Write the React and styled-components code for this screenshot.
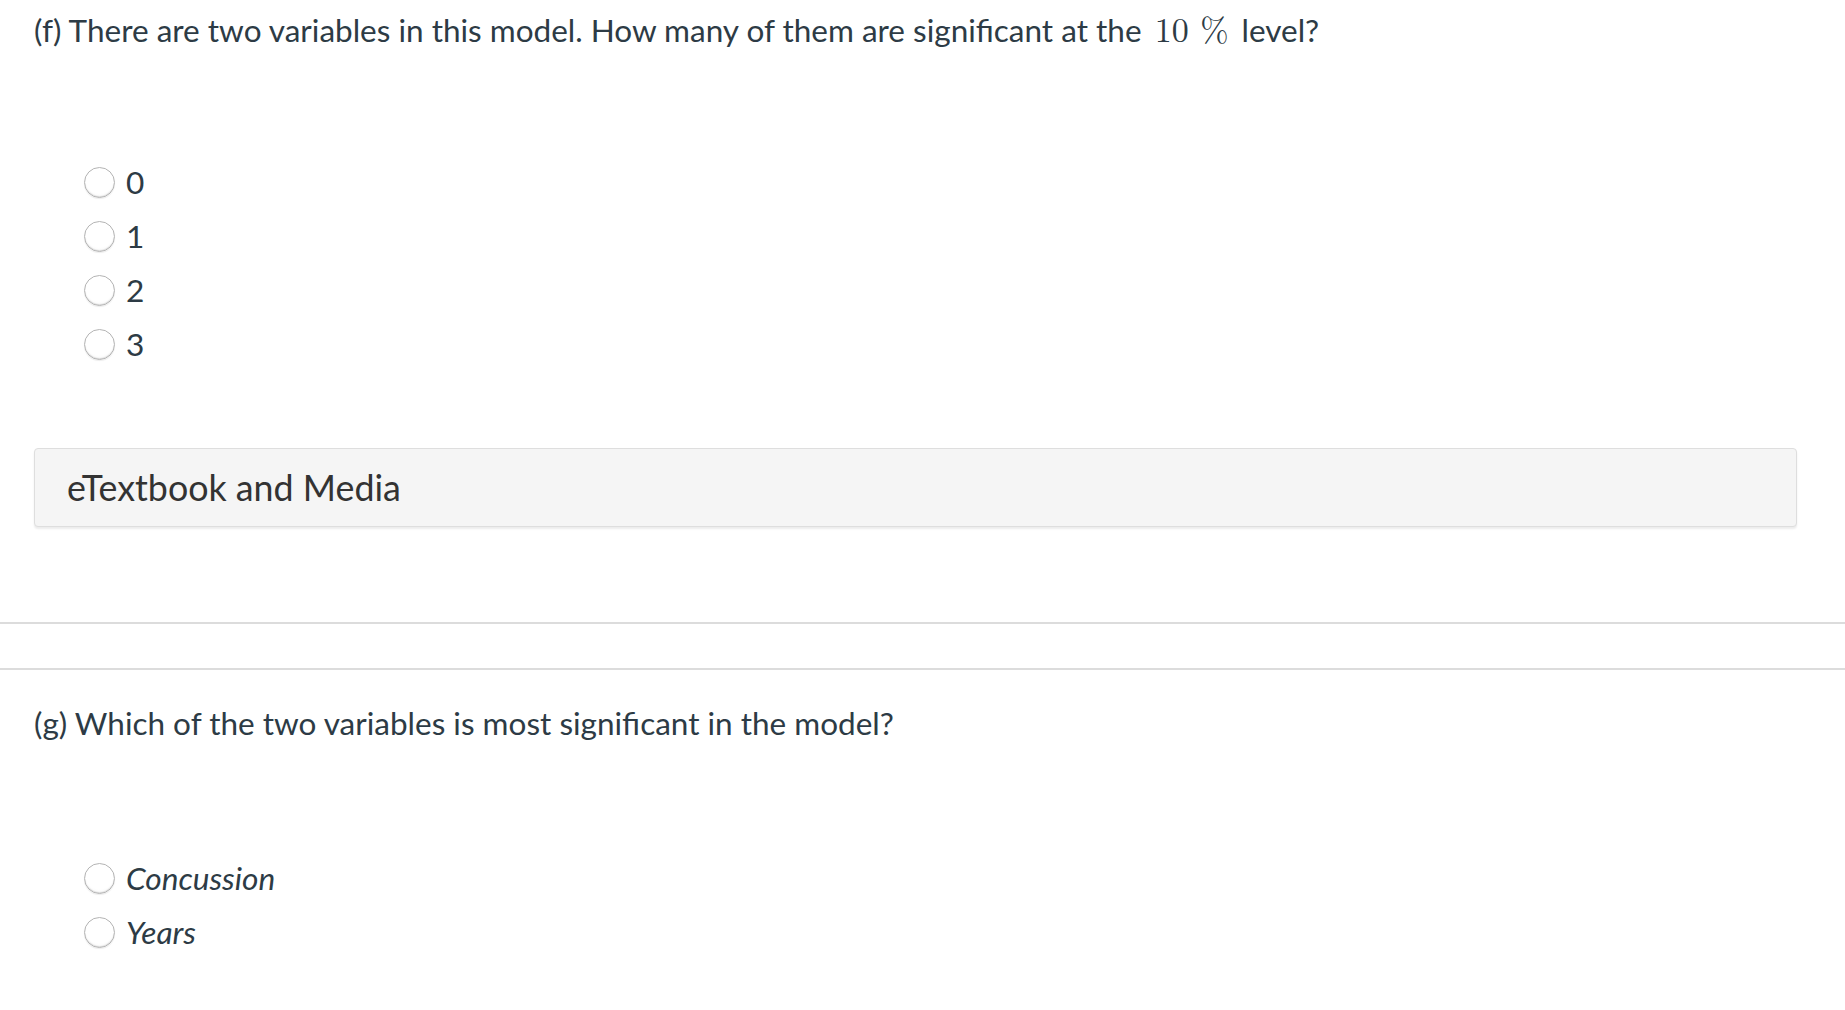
import React from "react";
import styled, { createGlobalStyle } from "styled-components";

const GlobalStyle = createGlobalStyle`
  html, body {
    margin: 0;
    padding: 0;
    background: #ffffff;
  }
  body {
    font-family: Lato, "Noto Sans", "Liberation Sans", sans-serif;
    color: #2d3b45;
  }
`;

const Page = styled.div`
  width: 1845px;
  height: 1010px;
  overflow: hidden;
  box-sizing: border-box;
  padding-top: 8px;
`;

const Question = styled.section`
  padding: 0 48px 0 34px;
`;

const Prompt = styled.p`
  margin: ${props => props.$top || 0}px 0 0;
  font-size: 31.5px;
  line-height: 40px;
  color: #2d3b45;
`;

const MathText = styled.span`
  font-family: "Latin Modern Roman", "Liberation Serif", "DejaVu Serif", serif;
  font-size: 34px;
  margin: 0 13px 0 2px;
`;

const Options = styled.ul`
  list-style: none;
  margin: ${props => props.$top}px 0 0 50px;
  padding: 0;
`;

const Option = styled.li`
  display: flex;
  align-items: center;
  height: 54px;
  gap: 11px;
  font-size: 31.6px;
  font-style: ${props => (props.$italic ? "italic" : "normal")};
  color: #2d3b45;
`;

const Radio = styled.span`
  flex: none;
  width: 31px;
  height: 31px;
  border-radius: 50%;
  box-sizing: border-box;
  border: 1px solid #b4b4b4;
  background: radial-gradient(circle at 50% 40%, #ffffff 60%, #f1f1f1 100%);
  box-shadow: inset 0 -1px 1px rgba(0, 0, 0, 0.12), 0 1px 1px rgba(0, 0, 0, 0.08);
`;

const MediaBox = styled.div`
  margin-top: 77px;
  height: 79px;
  box-sizing: border-box;
  display: flex;
  align-items: center;
  padding-left: 32px;
  background: #f5f5f5;
  border: 1px solid #dedede;
  border-radius: 4px;
  box-shadow: 0 2px 2px rgba(0, 0, 0, 0.08);
  font-size: 35.8px;
  color: #333333;
`;

const Divider = styled.hr`
  margin: ${props => props.$top}px 0 0;
  border: none;
  border-top: 2px solid #dcdcdc;
  height: 0;
`;

const options1 = ["0", "1", "2", "3"];
const options2 = ["Concussion", "Years"];

export default function App() {
  return (
    <Page>
      <GlobalStyle />
      <Question>
        <Prompt>
          (f) There are two variables in this model. How many of them are significant at the
          <MathText> 10 %</MathText>level?
        </Prompt>
        <Options $top={105}>
          {options1.map(o => (
            <Option key={o}>
              <Radio />
              {o}
            </Option>
          ))}
        </Options>
        <MediaBox>eTextbook and Media</MediaBox>
      </Question>
      <Divider $top={95} />
      <Divider $top={44} />
      <Question>
        <Prompt $top={33}>
          (g) Which of the two variables is most significant in the model?
        </Prompt>
        <Options $top={108}>
          {options2.map(o => (
            <Option key={o} $italic>
              <Radio />
              {o}
            </Option>
          ))}
        </Options>
      </Question>
    </Page>
  );
}
